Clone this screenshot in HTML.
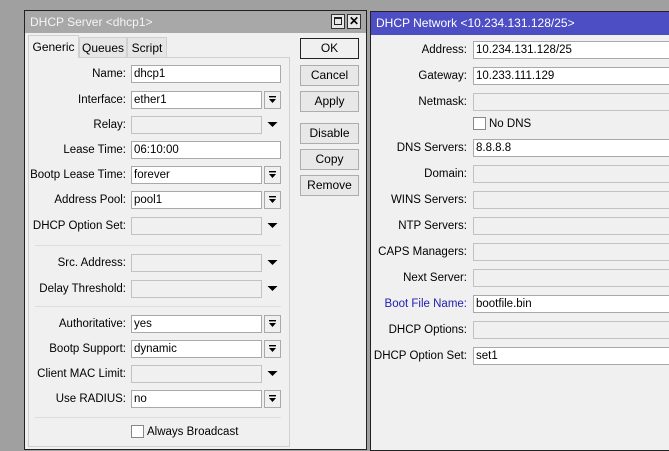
<!DOCTYPE html>
<html><head><style>
body{margin:0;width:669px;height:439px;background:#a0a0a0;position:relative;overflow:hidden;font-family:"Liberation Sans",sans-serif;font-size:11.5px;color:#000}
div{position:absolute;box-sizing:border-box}
.win{background:#f0f0f0;border:1px solid #222}
.lbl{text-align:right;white-space:nowrap;height:18px;line-height:18px}
.f{background:#fff;border:1px solid #a9a9a9;height:18px;line-height:16px;padding-left:2px;white-space:nowrap}
.f.d{background:#f0f0f0;border-color:#c2c2c2}
.db{width:17px;height:18px;border:1px solid #a9a9a9;background:#f0f0f0}
.db svg{position:absolute;left:0;top:0}
.btn{left:300px;width:59px;height:21px;border:1px solid #adadad;background:#e8e8e8;text-align:center;line-height:19px;font-size:12px}
.sep{height:1px;background:#ddd}
.cb{width:13px;height:13px;border:1px solid #888;background:#fff}
</style></head><body>
<svg width="0" height="0" style="position:absolute"><defs>
<symbol id="dd" viewBox="0 0 15 16"><rect x="4" y="4" width="7" height="1.4" fill="#000"/><path d="M4 7h7l-3.5 4z" fill="#000"/></symbol>
<symbol id="tr" viewBox="0 0 17 18"><path d="M3.5 6h10l-5 5z" fill="#000"/></symbol>
</defs></svg>
<div class="win" style="left:24px;top:10px;width:343px;height:440px"></div>
<div style="left:25px;top:11px;width:341px;height:22px;background:#a8a8a8;color:#f4f4f4;line-height:22px;padding-left:5px;font-size:12px">DHCP Server &lt;dhcp1&gt;</div>
<div style="left:331px;top:14px;width:14px;height:15px;border:1px solid #333;background:#e8e8e8"><div style="left:2px;top:2px;width:8px;height:8px;border:1px solid #222;border-top-width:2px"></div></div>
<div style="left:347px;top:14px;width:14px;height:15px;border:1px solid #333;background:#e8e8e8;text-align:center;line-height:13px;font-weight:bold;font-size:12px">✕</div>
<div style="left:28px;top:35px;width:51px;height:23px;background:#f0f0f0;border:1px solid #d0d0d0;border-bottom:none;text-align:center;line-height:22px;z-index:2;font-size:12px">Generic</div>
<div style="left:79px;top:37px;width:48px;height:21px;background:#e6e6e6;border:1px solid #d0d0d0;text-align:center;line-height:20px;font-size:12px">Queues</div>
<div style="left:127px;top:37px;width:40px;height:21px;background:#e6e6e6;border:1px solid #d0d0d0;text-align:center;line-height:20px;font-size:12px">Script</div>
<div style="left:28px;top:57px;width:262px;height:390px;border:1px solid #d0d0d0"></div>

<div class="lbl" style="left:30px;width:96px;top:65px">Name:</div><div class="f" style="left:131px;top:65px;width:150px">dhcp1</div>
<div class="lbl" style="left:30px;width:96px;top:91px">Interface:</div><div class="f" style="left:131px;top:91px;width:131px">ether1</div><div class="db" style="left:264px;top:91px"><svg width="15" height="16"><use href="#dd"/></svg></div>
<div class="lbl" style="left:30px;width:96px;top:116px">Relay:</div><div class="f d" style="left:131px;top:116px;width:131px"></div><svg style="position:absolute;left:264px;top:116px" width="17" height="18"><use href="#tr"/></svg>
<div class="lbl" style="left:30px;width:96px;top:141px">Lease Time:</div><div class="f" style="left:131px;top:141px;width:150px">06:10:00</div>
<div class="lbl" style="left:30px;width:96px;top:166px">Bootp Lease Time:</div><div class="f" style="left:131px;top:166px;width:131px">forever</div><div class="db" style="left:264px;top:166px"><svg width="15" height="16"><use href="#dd"/></svg></div>
<div class="lbl" style="left:30px;width:96px;top:191px">Address Pool:</div><div class="f" style="left:131px;top:191px;width:131px">pool1</div><div class="db" style="left:264px;top:191px"><svg width="15" height="16"><use href="#dd"/></svg></div>
<div class="lbl" style="left:30px;width:96px;top:217px">DHCP Option Set:</div><div class="f d" style="left:131px;top:217px;width:131px"></div><svg style="position:absolute;left:264px;top:217px" width="17" height="18"><use href="#tr"/></svg>
<div class="sep" style="left:35px;top:245px;width:246px"></div>
<div class="lbl" style="left:30px;width:96px;top:254px">Src. Address:</div><div class="f d" style="left:131px;top:254px;width:131px"></div><svg style="position:absolute;left:264px;top:254px" width="17" height="18"><use href="#tr"/></svg>
<div class="lbl" style="left:30px;width:96px;top:280px">Delay Threshold:</div><div class="f d" style="left:131px;top:280px;width:131px"></div><svg style="position:absolute;left:264px;top:280px" width="17" height="18"><use href="#tr"/></svg>
<div class="sep" style="left:35px;top:306px;width:246px"></div>
<div class="lbl" style="left:30px;width:96px;top:315px">Authoritative:</div><div class="f" style="left:131px;top:315px;width:131px">yes</div><div class="db" style="left:264px;top:315px"><svg width="15" height="16"><use href="#dd"/></svg></div>
<div class="lbl" style="left:30px;width:96px;top:340px">Bootp Support:</div><div class="f" style="left:131px;top:340px;width:131px">dynamic</div><div class="db" style="left:264px;top:340px"><svg width="15" height="16"><use href="#dd"/></svg></div>
<div class="lbl" style="left:30px;width:96px;top:365px">Client MAC Limit:</div><div class="f d" style="left:131px;top:365px;width:131px"></div><svg style="position:absolute;left:264px;top:365px" width="17" height="18"><use href="#tr"/></svg>
<div class="lbl" style="left:30px;width:96px;top:390px">Use RADIUS:</div><div class="f" style="left:131px;top:390px;width:131px">no</div><div class="db" style="left:264px;top:390px"><svg width="15" height="16"><use href="#dd"/></svg></div>
<div class="sep" style="left:35px;top:417px;width:246px"></div>
<div class="cb" style="left:131px;top:425px"></div><div style="left:147px;top:424px;line-height:16px">Always Broadcast</div>

<div class="btn" style="top:38px;border-color:#222;background:#f0f0f0">OK</div>
<div class="btn" style="top:65px">Cancel</div>
<div class="btn" style="top:91px">Apply</div>
<div class="btn" style="top:123px">Disable</div>
<div class="btn" style="top:149px">Copy</div>
<div class="btn" style="top:175px">Remove</div>

<div class="win" style="left:370px;top:11px;width:310px;height:440px"></div>
<div style="left:371px;top:12px;width:298px;height:23px;background:#4d4dc4;color:#fff;line-height:23px;padding-left:5px;font-size:12px">DHCP Network &lt;10.234.131.128/25&gt;</div>
<div class="lbl" style="left:372px;width:95px;top:41px">Address:</div><div class="f" style="left:473px;top:41px;width:210px">10.234.131.128/25</div>
<div class="lbl" style="left:372px;width:95px;top:67px">Gateway:</div><div class="f" style="left:473px;top:67px;width:210px">10.233.111.129</div>
<div class="lbl" style="left:372px;width:95px;top:93px">Netmask:</div><div class="f d" style="left:473px;top:93px;width:210px"></div>
<div class="cb" style="left:473px;top:117px"></div><div style="left:489px;top:116px;line-height:16px">No DNS</div>
<div class="lbl" style="left:372px;width:95px;top:139px">DNS Servers:</div><div class="f" style="left:473px;top:139px;width:210px">8.8.8.8</div>
<div class="lbl" style="left:372px;width:95px;top:165px">Domain:</div><div class="f d" style="left:473px;top:165px;width:210px"></div>
<div class="lbl" style="left:372px;width:95px;top:191px">WINS Servers:</div><div class="f d" style="left:473px;top:191px;width:210px"></div>
<div class="lbl" style="left:372px;width:95px;top:217px">NTP Servers:</div><div class="f d" style="left:473px;top:217px;width:210px"></div>
<div class="lbl" style="left:372px;width:95px;top:243px">CAPS Managers:</div><div class="f d" style="left:473px;top:243px;width:210px"></div>
<div class="lbl" style="left:372px;width:95px;top:269px">Next Server:</div><div class="f d" style="left:473px;top:269px;width:210px"></div>
<div class="lbl" style="left:372px;width:95px;top:295px;color:#2020b0">Boot File Name:</div><div class="f" style="left:473px;top:295px;width:210px">bootfile.bin</div>
<div class="lbl" style="left:372px;width:95px;top:321px">DHCP Options:</div><div class="f d" style="left:473px;top:321px;width:210px"></div>
<div class="lbl" style="left:372px;width:95px;top:347px">DHCP Option Set:</div><div class="f" style="left:473px;top:347px;width:210px">set1</div>
</body></html>
